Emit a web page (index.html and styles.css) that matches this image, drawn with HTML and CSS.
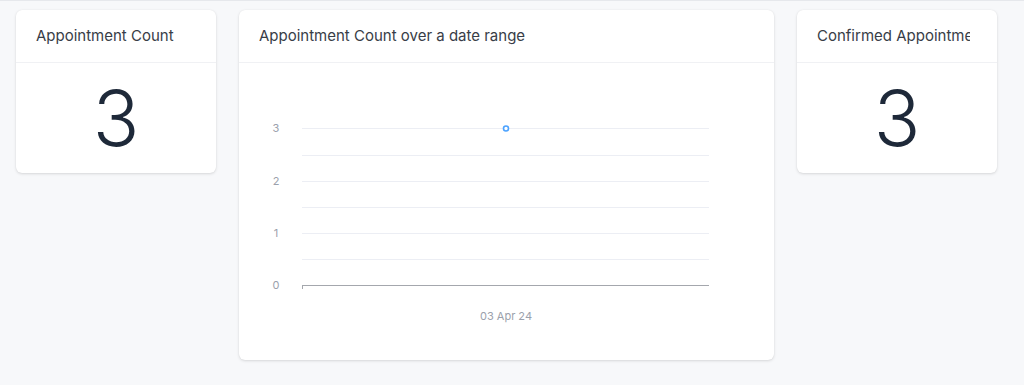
FILE: index.html
```html
<!DOCTYPE html>
<html lang="en">
<head>
  <meta charset="UTF-8">
  <meta name="viewport" content="width=device-width, initial-scale=1">
  <title>Appointments | Dashboard</title>
  <link rel="stylesheet" href="styles.css">
</head>
<body>
  <div class="dashboard">
    <div class="card card-number">
      <div class="card-head"><div class="card-title">Appointment Count</div></div>
      <div class="card-body number">3</div>
    </div>

    <div class="card card-chart">
      <div class="card-head"><div class="card-title">Appointment Count over a date range</div></div>
      <div class="card-body chart">
        <svg width="535" height="297" viewBox="0 0 535 297">
          <g class="grid">
            <line x1="63" y1="65.5" x2="470" y2="65.5"></line>
            <line x1="63" y1="92.5" x2="470" y2="92.5"></line>
            <line x1="63" y1="118.5" x2="470" y2="118.5"></line>
            <line x1="63" y1="144.5" x2="470" y2="144.5"></line>
            <line x1="63" y1="170.5" x2="470" y2="170.5"></line>
            <line x1="63" y1="196.5" x2="470" y2="196.5"></line>
          </g>
          <line class="axis" x1="63" y1="222.5" x2="470" y2="222.5"></line>
          <line class="axis" x1="63.5" y1="222" x2="63.5" y2="226"></line>
          <g class="ylabels">
            <text x="37" y="69">3</text>
            <text x="37" y="122">2</text>
            <text x="37" y="174">1</text>
            <text x="37" y="226">0</text>
          </g>
          <text class="xlabel" x="267" y="257">03 Apr 24</text>
          <circle class="point" cx="267" cy="65.5" r="2.5"></circle>
        </svg>
      </div>
    </div>

    <div class="card card-number">
      <div class="card-head clip"><div class="card-title">Confirmed Appointments</div></div>
      <div class="card-body number">3</div>
    </div>
  </div>
</body>
</html>
```

FILE: styles.css
```css
body {
  font-family: Inter, "Noto Sans", Arial, sans-serif;
  margin: 0;
  background-color: #f7f8fa;
  color: #374151;
}

.dashboard {
  border-top: 1px solid #e6e8ec;
  padding: 9px 16px;
  display: grid;
  grid-template-columns: 200px 535px 200px;
  column-gap: 23px;
  align-items: start;
  min-height: 360px;
}

.card {
  background-color: #fff;
  border-radius: 6px;
  box-shadow: 0 1px 3px rgba(0, 0, 0, 0.13), 0 0 1px rgba(0, 0, 0, 0.08);
}

.card-head {
  padding: 16px 20px;
  border-bottom: 1px solid #f0f1f4;
}

.card-head.clip {
  padding-right: 27px;
}

.card-title {
  font-size: 15px;
  line-height: 20px;
  color: #383d47;
  white-space: nowrap;
  overflow: hidden;
}

.number {
  height: 110px;
  display: flex;
  align-items: center;
  justify-content: center;
  font-size: 77px;
  line-height: 1;
  font-weight: 300;
  color: #1e2939;
}

.chart {
  height: 297px;
}

.chart svg {
  display: block;
}

.grid line {
  stroke: #eceef4;
  stroke-width: 1;
}

.axis {
  stroke: #a4a7ad;
  stroke-width: 1;
}

.ylabels text,
.xlabel {
  font-family: Inter, "Noto Sans", Arial, sans-serif;
  font-size: 11px;
  fill: #9ba1ac;
  text-anchor: middle;
}

.point {
  fill: #fff;
  stroke: #4da3ff;
  stroke-width: 1.6;
}
```
